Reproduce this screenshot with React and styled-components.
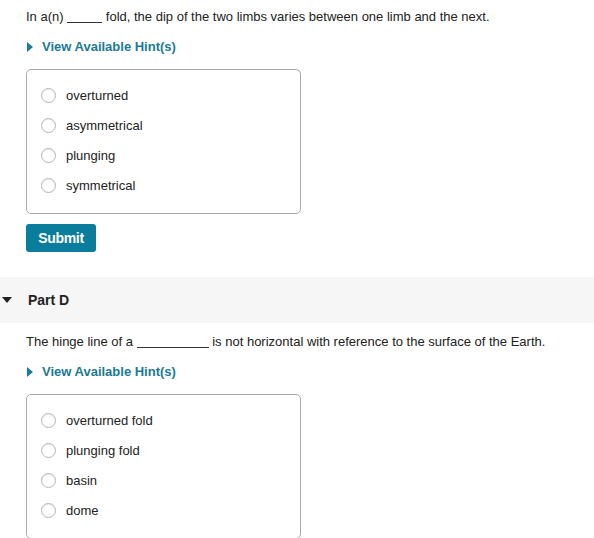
import styled, { createGlobalStyle } from "styled-components";

const GlobalStyle = createGlobalStyle`
  body {
    margin: 0;
    background: #ffffff;
    font-family: "Liberation Sans", Arial, sans-serif;
    color: #222222;
  }
`;

const partC = {
  before: "In a(n)",
  blank: 35,
  after: "fold, the dip of the two limbs varies between one limb and the next.",
  options: ["overturned", "asymmetrical", "plunging", "symmetrical"],
};

const partD = {
  before: "The hinge line of a",
  blank: 72,
  after: "is not horizontal with reference to the surface of the Earth.",
  options: ["overturned fold", "plunging fold", "basin", "dome"],
};

const Question = ({ data, name }) => (
  <>
    <Prompt>
      {data.before} <Blank $width={data.blank} /> {data.after}
    </Prompt>
    <HintLink>
      <HintArrow />
      View Available Hint(s)
    </HintLink>
    <ChoiceBox>
      {data.options.map((opt) => (
        <Choice key={opt}>
          <Radio type="radio" name={name} />
          {opt}
        </Choice>
      ))}
    </ChoiceBox>
  </>
);

const App = () => (
  <Page>
    <GlobalStyle />
    <Section>
      <Question data={partC} name="partC" />
      <SubmitButton>Submit</SubmitButton>
    </Section>
    <PartHeader>
      <CollapseArrow />
      Part D
    </PartHeader>
    <Section $top={11}>
      <Question data={partD} name="partD" />
    </Section>
  </Page>
);

const Page = styled.div`
  width: 594px;
  height: 538px;
  overflow: hidden;
`;

const Section = styled.div`
  padding: ${(p) => p.$top ?? 9}px 0 0 26px;
`;

const Prompt = styled.div`
  font-size: 13px;
  line-height: 16px;
  color: #222;
  white-space: nowrap;
`;

const Blank = styled.span`
  display: inline-block;
  width: ${(p) => p.$width}px;
  border-bottom: 1px solid #333;
  vertical-align: -2px;
`;

const HintLink = styled.div`
  display: flex;
  align-items: center;
  gap: 9px;
  margin-top: 14px;
  font-size: 13px;
  line-height: 16px;
  font-weight: bold;
  color: #1b7a97;
  padding-left: 1px;
`;

const HintArrow = styled.span`
  width: 0;
  height: 0;
  border-top: 5px solid transparent;
  border-bottom: 5px solid transparent;
  border-left: 6px solid #1b7a97;
`;

const ChoiceBox = styled.div`
  width: 275px;
  box-sizing: border-box;
  margin-top: 14px;
  border: 1px solid #a9a9a9;
  border-radius: 5px;
  padding: 17px 0 20px 14px;
  display: flex;
  flex-direction: column;
  gap: 14px;
`;

const Choice = styled.label`
  display: flex;
  align-items: center;
  height: 16px;
  font-size: 13px;
  color: #222;
`;

const Radio = styled.input`
  appearance: none;
  width: 15px;
  height: 15px;
  margin: 0 10px 0 0;
  border: 1px solid #b5b5b5;
  border-radius: 50%;
  background: #fff;
  box-shadow: inset 0 1px 1px rgba(0, 0, 0, 0.08);
`;

const SubmitButton = styled.button`
  display: block;
  margin-top: 10px;
  width: 70px;
  height: 28px;
  border: none;
  border-radius: 3px;
  background: #097d9b;
  color: #fff;
  font-family: "Liberation Sans", Arial, sans-serif;
  font-size: 14px;
  font-weight: bold;
  letter-spacing: -0.3px;
  padding: 0;
`;

const PartHeader = styled.div`
  margin-top: 25px;
  height: 46px;
  background: #f6f6f6;
  display: flex;
  align-items: center;
  gap: 16px;
  padding-left: 2px;
  font-size: 14px;
  font-weight: bold;
  color: #222;
`;

const CollapseArrow = styled.span`
  width: 0;
  height: 0;
  border-left: 5.5px solid transparent;
  border-right: 5.5px solid transparent;
  border-top: 6px solid #222;
`;

export default App;
